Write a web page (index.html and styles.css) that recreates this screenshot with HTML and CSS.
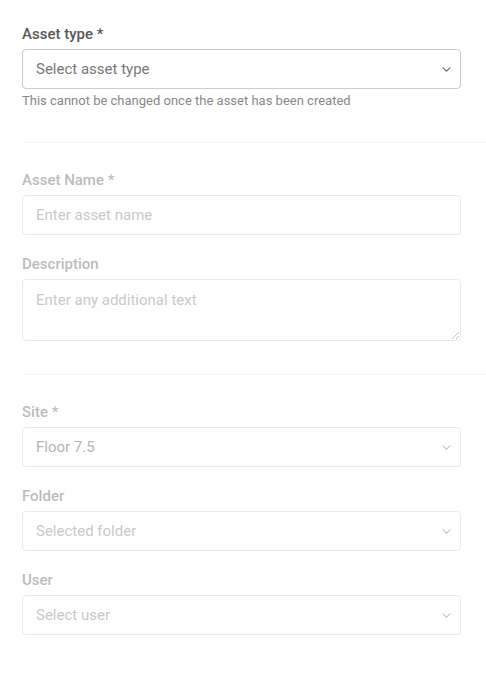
FILE: index.html
```html
<!DOCTYPE html>
<html lang="en">
<head>
<meta charset="utf-8">
<title>Create asset</title>
<link rel="stylesheet" href="styles.css">
</head>
<body>
<form class="form">
  <section class="section section-first">
    <div class="field">
      <label class="label">Asset type *</label>
      <div class="select">
        <span class="select-text">Select asset type</span>
        <svg class="chevron" width="9" height="5" viewBox="0 0 9 5"><path d="M1 0.8l3.5 3.4 3.5-3.4" fill="none" stroke="currentColor" stroke-width="1.1" stroke-linecap="round" stroke-linejoin="round"/></svg>
      </div>
      <p class="help">This cannot be changed once the asset has been created</p>
    </div>
  </section>
  <section class="section disabled">
    <div class="field">
      <label class="label">Asset Name *</label>
      <input class="input" type="text" placeholder="Enter asset name" disabled>
    </div>
    <div class="field">
      <label class="label">Description</label>
      <textarea class="input textarea" placeholder="Enter any additional text" disabled></textarea>
    </div>
  </section>
  <section class="section disabled">
    <div class="field">
      <label class="label">Site *</label>
      <div class="select">
        <span class="select-value">Floor 7.5</span>
        <svg class="chevron" width="9" height="5" viewBox="0 0 9 5"><path d="M1 0.8l3.5 3.4 3.5-3.4" fill="none" stroke="currentColor" stroke-width="1.1" stroke-linecap="round" stroke-linejoin="round"/></svg>
      </div>
    </div>
    <div class="field">
      <label class="label">Folder</label>
      <div class="select">
        <span class="select-text">Selected folder</span>
        <svg class="chevron" width="9" height="5" viewBox="0 0 9 5"><path d="M1 0.8l3.5 3.4 3.5-3.4" fill="none" stroke="currentColor" stroke-width="1.1" stroke-linecap="round" stroke-linejoin="round"/></svg>
      </div>
    </div>
    <div class="field">
      <label class="label">User</label>
      <div class="select">
        <span class="select-text">Select user</span>
        <svg class="chevron" width="9" height="5" viewBox="0 0 9 5"><path d="M1 0.8l3.5 3.4 3.5-3.4" fill="none" stroke="currentColor" stroke-width="1.1" stroke-linecap="round" stroke-linejoin="round"/></svg>
      </div>
    </div>
  </section>
</form>
</body>
</html>
```
FILE: styles.css
```css
* { box-sizing: border-box; }
html, body {
  margin: 0;
  padding: 0;
  background: #ffffff;
  font-family: Roboto, "Liberation Sans", Arial, sans-serif;
  color: #555555;
}
.form {
  display: flex;
  flex-direction: column;
  padding-left: 22px;
}
.section {
  display: flex;
  flex-direction: column;
  gap: 19px;
  padding: 27px 25px 33px 0;
  border-top: 1px solid #eeeeee;
}
.section-first {
  border-top: none;
  padding-top: 24px;
}
.section.disabled { opacity: 0.4; }
.field {
  display: flex;
  flex-direction: column;
}
.label {
  font-size: 15px;
  line-height: 20px;
  font-weight: 500;
  color: #585858;
  margin-bottom: 5px;
}
.select, .input {
  width: 100%;
  height: 40px;
  border: 1px solid #cccccc;
  border-radius: 4px;
  background: #ffffff;
  font-family: inherit;
  font-size: 15px;
  padding: 0 13px;
}
.select {
  display: flex;
  align-items: center;
  justify-content: space-between;
  gap: 10px;
  padding-right: 9px;
}
.select-text { color: #777777; }
.select-value { color: #444444; }
.chevron {
  color: #666666;
  flex-shrink: 0;
}
.input {
  color: #444444;
  outline: none;
}
.input::placeholder { color: #777777; opacity: 1; }
.textarea {
  height: 62px;
  padding: 10px 13px;
  line-height: 20px;
  resize: vertical;
  display: block;
}
.help {
  margin: 4px 0 0;
  font-size: 13px;
  line-height: 16px;
  color: #888888;
}
```
